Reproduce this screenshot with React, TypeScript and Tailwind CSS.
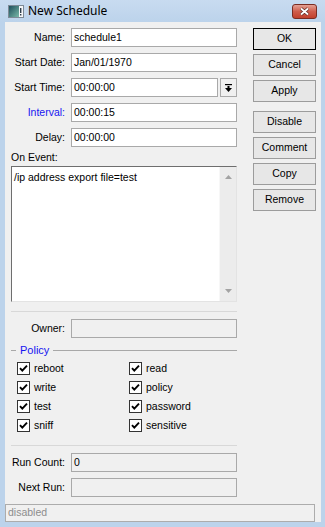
import React from "react";

function Field({
  label,
  value,
  blue,
  disabled,
  extra,
}: {
  label: string;
  value?: string;
  blue?: boolean;
  disabled?: boolean;
  extra?: React.ReactNode;
}) {
  return (
    <div className="flex h-[19px] items-center">
      <div className={`w-[54px] whitespace-nowrap text-right ${blue ? "text-[#1515f0]" : "text-black"}`}>{label}</div>
      <div
        className={`ml-[6px] flex h-[19px] flex-1 items-center border border-[#a9a9a9] px-[2px] ${
          disabled ? "bg-[#f0f0f0]" : "bg-white"
        }`}
      >
        {value}
      </div>
      {extra}
    </div>
  );
}

function Check({ label }: { label: string }) {
  return (
    <div className="flex h-[19px] items-center gap-[4px]">
      <div className="h-[13px] w-[13px] border border-[#333] bg-white">
        <svg width="11" height="11" viewBox="0 0 11 11">
          <path d="M2 5.2 L4.3 7.7 L9 2.6" fill="none" stroke="#000" strokeWidth="1.9" />
        </svg>
      </div>
      <span>{label}</span>
    </div>
  );
}

function Btn({ label, primary }: { label: string; primary?: boolean }) {
  return (
    <div
      className={`flex h-[22px] items-center justify-center border bg-[#e7e7e7] ${
        primary ? "border-black" : "border-[#9c9c9c]"
      }`}
    >
      {label}
    </div>
  );
}

export default function App() {
  return (
    <div className="flex h-[527px] w-[325px] flex-col bg-[#bcd3eb] font-['Liberation_Sans',Arial,sans-serif] text-[10.5px] text-black">
      {/* title bar */}
      <div className="flex h-[22px] items-center bg-gradient-to-b from-[#c8dbf0] to-[#bcd3eb] pl-[8px]">
        <svg width="16" height="13" viewBox="0 0 16 13">
          <defs>
            <linearGradient id="g" x1="0" y1="0" x2="1" y2="1">
              <stop offset="0" stopColor="#1f4f5c" />
              <stop offset="1" stopColor="#78b9a8" />
            </linearGradient>
          </defs>
          <rect x="0.5" y="0.5" width="15" height="12" fill="#f4f6f8" stroke="#7d8a96" />
          <rect x="1" y="1" width="10" height="11" fill="url(#g)" />
          <rect x="12" y="3" width="1.4" height="5" fill="#2d3e4a" />
          <rect x="12" y="9" width="1.4" height="1.5" fill="#2d3e4a" />
        </svg>
        <span className="ml-[4px] font-['Segoe_UI','Noto_Sans',sans-serif] text-[12px] text-black">New Schedule</span>
        <div className="ml-auto mr-[8px] mt-[1px] flex h-[15px] w-[25px] items-center justify-center rounded-[3px] border border-[#7a2c22] bg-gradient-to-b from-[#e3a094] via-[#cf5c4b] to-[#c2402c]">
          <svg width="11" height="9" viewBox="0 0 11 9">
            <path d="M2 1.5 L9 7.5 M9 1.5 L2 7.5" stroke="#5a2a25" strokeWidth="3.2" />
            <path d="M2 1.5 L9 7.5 M9 1.5 L2 7.5" stroke="#fff" strokeWidth="1.8" />
          </svg>
        </div>
      </div>

      {/* content */}
      <div className="mb-[5px] ml-[5px] mr-[4px] flex flex-1 flex-col bg-[#f0f0f0]">
        <div className="flex flex-1 pl-[6px] pt-[6px]">
          <div className="flex w-[226px] flex-col">
            <Field label="Name:" value="schedule1" />
            <div className="mt-[6px]">
              <Field label="Start Date:" value="Jan/01/1970" />
            </div>
            <div className="mt-[6px]">
              <Field
                label="Start Time:"
                value="00:00:00"
                extra={
                  <div className="ml-[2px] flex h-[19px] w-[17px] items-center justify-center border border-[#a9a9a9] bg-[#f0f0f0]">
                    <svg width="7" height="8" viewBox="0 0 7 8">
                      <rect x="0" y="0" width="7" height="1.2" fill="#000" />
                      <rect x="2.5" y="2" width="2" height="2" fill="#000" />
                      <path d="M0 4 L7 4 L3.5 8 Z" fill="#000" />
                    </svg>
                  </div>
                }
              />
            </div>
            <div className="mt-[6px]">
              <Field label="Interval:" value="00:00:15" blue />
            </div>
            <div className="mt-[6px]">
              <Field label="Delay:" value="00:00:00" />
            </div>
            <div className="mt-[4px] h-[13px] leading-[13px]">On Event:</div>
            <div className="mt-[2px] flex h-[136px] border-b border-l border-r border-t border-b-[#e3e3e3] border-l-[#6e6e6e] border-r-[#e3e3e3] border-t-[#6e6e6e] bg-white">
              <div className="flex-1 pl-[2px] pt-[3px]">/ip address export file=test</div>
              <div className="flex w-[17px] flex-col items-center justify-between border-l border-[#f7f7f7] bg-[#ececec] py-[8px]">
                <svg width="7" height="4" viewBox="0 0 7 4">
                  <path d="M0 4 L3.5 0 L7 4 Z" fill="#a3a3a3" />
                </svg>
                <svg width="7" height="4" viewBox="0 0 7 4">
                  <path d="M0 0 L7 0 L3.5 4 Z" fill="#a3a3a3" />
                </svg>
              </div>
            </div>
            <div className="mt-[9px] h-px bg-[#d8d8d8]" />
            <div className="mt-[7px]">
              <Field label="Owner:" disabled />
            </div>
            <div className="mt-[6px] flex h-[13px] items-center">
              <div className="h-px w-[5px] bg-[#a8a8a8]" />
              <span className="mx-[4px] text-[11px] text-[#1515f0]">Policy</span>
              <div className="h-px flex-1 bg-[#a8a8a8]" />
            </div>
            <div className="mt-[2px] grid grid-cols-[112px_1fr] pl-[6px]">
              <Check label="reboot" />
              <Check label="read" />
              <Check label="write" />
              <Check label="policy" />
              <Check label="test" />
              <Check label="password" />
              <Check label="sniff" />
              <Check label="sensitive" />
            </div>
            <div className="mt-[10px] h-px bg-[#d8d8d8]" />
            <div className="mt-[7px]">
              <Field label="Run Count:" value="0" disabled />
            </div>
            <div className="mt-[6px]">
              <Field label="Next Run:" disabled />
            </div>
          </div>

          <div className="ml-[16px] flex w-[63px] flex-col gap-[4px]">
            <Btn label="OK" primary />
            <Btn label="Cancel" />
            <Btn label="Apply" />
            <div className="mt-[5px]">
              <Btn label="Disable" />
            </div>
            <Btn label="Comment" />
            <Btn label="Copy" />
            <Btn label="Remove" />
          </div>
        </div>
        <div className="mr-[6px] flex h-[18px] items-center border border-[#acacac] pl-[2px] text-[#8d8d8d]">disabled</div>
      </div>
    </div>
  );
}
